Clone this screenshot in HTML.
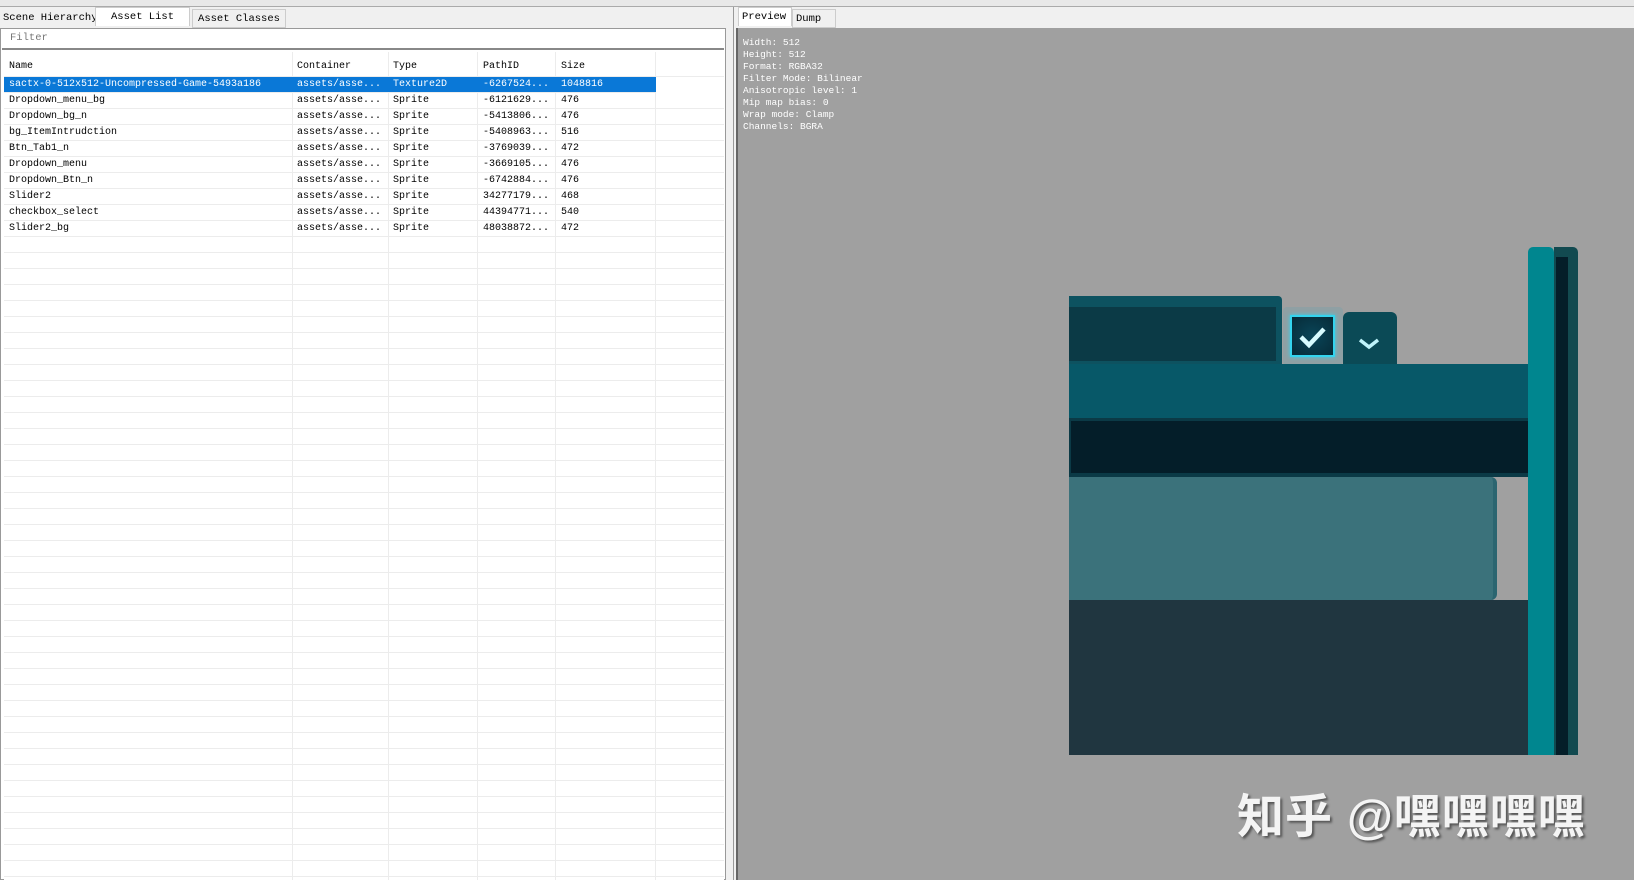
<!DOCTYPE html>
<html><head><meta charset="utf-8"><style>
*{margin:0;padding:0;box-sizing:border-box}
body{width:1634px;height:880px;overflow:hidden;background:#f0f0f0;font-family:"Liberation Mono","Noto Sans CJK SC",monospace;font-size:10px;color:#000;position:relative}
.a{position:absolute}
.tab{position:absolute;top:9px;height:19px;line-height:18px;font-size:10.5px;padding:0 3px}
.grid{position:absolute;left:4px;top:52px;width:720px;height:828px;background:#fff}
.row{position:absolute;left:4px;height:16px;width:720px;border-bottom:1px solid #ececec}
.row span{position:absolute;top:2px;white-space:nowrap}
.vl{position:absolute;top:52px;bottom:0;width:1px;background:#ececec}
.info{position:absolute;left:743px;top:37px;color:#fff;font-size:9.5px;line-height:12px;white-space:pre}
</style></head><body>
<div class="a" style="left:0;top:0;width:1634px;height:7px;background:#e8e8e8;border-bottom:1px solid #aaa"></div>
<div class="a" style="left:0;top:28px;width:726px;height:852px;background:#fff;border:1px solid #999"></div>
<div class="tab" style="left:0;background:#f0f0f0">Scene Hierarchy</div>
<div class="tab" style="left:95px;top:7px;width:95px;background:#fff;border:1px solid #ccc;border-bottom:none;text-align:center">Asset List</div>
<div class="tab" style="left:192px;width:94px;background:#f0f0f0;border:1px solid #ccc;text-align:center">Asset Classes</div>
<div class="a" style="left:2px;top:29px;width:722px;height:21px;border-bottom:2px solid #888;background:#fff;color:#777;padding:3px 8px;font-size:10.5px">Filter</div>
<div class="grid"></div>
<div class="vl" style="left:292px"></div><div class="vl" style="left:388px"></div><div class="vl" style="left:477px"></div><div class="vl" style="left:555px"></div><div class="vl" style="left:655px"></div>
<div class="row" style="top:56px;height:21px"><span style="left:5px;top:5px">Name</span><span style="left:293px;top:5px">Container</span><span style="left:389px;top:5px">Type</span><span style="left:479px;top:5px">PathID</span><span style="left:557px;top:5px">Size</span></div>
<div class="row" style="top:77px;background:#0a78d7;color:#fff;width:652px"><span style="left:5px">sactx-0-512x512-Uncompressed-Game-5493a186</span><span style="left:293px">assets/asse...</span><span style="left:389px">Texture2D</span><span style="left:479px">-6267524...</span><span style="left:557px">1048816</span></div>
<div class="row" style="top:93px"><span style="left:5px">Dropdown_menu_bg</span><span style="left:293px">assets/asse...</span><span style="left:389px">Sprite</span><span style="left:479px">-6121629...</span><span style="left:557px">476</span></div>
<div class="row" style="top:109px"><span style="left:5px">Dropdown_bg_n</span><span style="left:293px">assets/asse...</span><span style="left:389px">Sprite</span><span style="left:479px">-5413806...</span><span style="left:557px">476</span></div>
<div class="row" style="top:125px"><span style="left:5px">bg_ItemIntrudction</span><span style="left:293px">assets/asse...</span><span style="left:389px">Sprite</span><span style="left:479px">-5408963...</span><span style="left:557px">516</span></div>
<div class="row" style="top:141px"><span style="left:5px">Btn_Tab1_n</span><span style="left:293px">assets/asse...</span><span style="left:389px">Sprite</span><span style="left:479px">-3769039...</span><span style="left:557px">472</span></div>
<div class="row" style="top:157px"><span style="left:5px">Dropdown_menu</span><span style="left:293px">assets/asse...</span><span style="left:389px">Sprite</span><span style="left:479px">-3669105...</span><span style="left:557px">476</span></div>
<div class="row" style="top:173px"><span style="left:5px">Dropdown_Btn_n</span><span style="left:293px">assets/asse...</span><span style="left:389px">Sprite</span><span style="left:479px">-6742884...</span><span style="left:557px">476</span></div>
<div class="row" style="top:189px"><span style="left:5px">Slider2</span><span style="left:293px">assets/asse...</span><span style="left:389px">Sprite</span><span style="left:479px">34277179...</span><span style="left:557px">468</span></div>
<div class="row" style="top:205px"><span style="left:5px">checkbox_select</span><span style="left:293px">assets/asse...</span><span style="left:389px">Sprite</span><span style="left:479px">44394771...</span><span style="left:557px">540</span></div>
<div class="row" style="top:221px"><span style="left:5px">Slider2_bg</span><span style="left:293px">assets/asse...</span><span style="left:389px">Sprite</span><span style="left:479px">48038872...</span><span style="left:557px">472</span></div>
<div class="a" style="left:4px;top:237px;width:720px;height:643px;background:repeating-linear-gradient(#fff 0 15px,#ececec 15px 16px)"></div>
<div class="vl" style="left:292px;top:237px"></div><div class="vl" style="left:388px;top:237px"></div><div class="vl" style="left:477px;top:237px"></div><div class="vl" style="left:555px;top:237px"></div><div class="vl" style="left:655px;top:237px"></div>
<div class="a" style="left:726px;top:7px;width:8px;height:873px;background:#f0f0f0;border-right:1px solid #999"></div>
<div class="tab" style="left:738px;top:7px;width:54px;background:#fff;border:1px solid #ccc;border-bottom:none">Preview</div>
<div class="tab" style="left:792px;width:44px;background:#f0f0f0;border:1px solid #ccc">Dump</div>
<div class="a" style="left:736px;top:28px;width:898px;height:852px;background:#a0a0a0;border-left:2px solid #666"></div>
<div class="info">Width: 512
Height: 512
Format: RGBA32
Filter Mode: Bilinear
Anisotropic level: 1
Mip map bias: 0
Wrap mode: Clamp
Channels: BGRA</div>
<div class="a" style="left:1069px;top:296px;width:213px;height:68px;background:#0d5260;border-radius:0 4px 0 0"></div>
<div class="a" style="left:1069px;top:307px;width:207px;height:54px;background:#0b3a46"></div>
<div class="a" style="left:1283px;top:307px;width:60px;height:58px;background:#8fa0a4;border-radius:4px"></div>
<div class="a" style="left:1290px;top:315px;width:45px;height:42px;background:radial-gradient(#0a4558,#062b38);border:2px solid #34d4ee;box-shadow:0 0 4px #34d4ee"></div>
<svg class="a" style="left:1290px;top:315px" width="45" height="42"><path d="M11 22 L19 30 L34 14" stroke="#d8fbff" stroke-width="4.5" fill="none"/></svg>
<div class="a" style="left:1343px;top:312px;width:54px;height:52px;background:#0b4a56;border-radius:6px 6px 0 0"></div>
<svg class="a" style="left:1343px;top:312px" width="54" height="52"><path d="M17 28 L26 35 L35 28" stroke="#bff4fb" stroke-width="3.5" fill="none"/></svg>
<div class="a" style="left:1069px;top:364px;width:466px;height:54px;background:#075868;border-radius:0 4px 0 0"></div>
<div class="a" style="left:1069px;top:418px;width:466px;height:59px;background:#0b3a46"></div>
<div class="a" style="left:1071px;top:421px;width:459px;height:52px;background:#041e29"></div>
<div class="a" style="left:1069px;top:477px;width:428px;height:123px;background:#3b727b;border-radius:0 6px 6px 0;border-right:4px solid #2b6570"></div>
<div class="a" style="left:1069px;top:600px;width:466px;height:155px;background:#203640;border-radius:0 4px 0 0"></div>
<div class="a" style="left:1528px;top:247px;width:26px;height:508px;background:#00868f;border-radius:5px 5px 0 0"></div>
<div class="a" style="left:1554px;top:247px;width:24px;height:508px;background:#124a50;border-radius:0 5px 0 0"></div>
<div class="a" style="left:1556px;top:257px;width:12px;height:498px;background:#041e29"></div>
<div class="a" style="left:1237px;top:778px;font-family:'Liberation Sans','Noto Sans CJK SC',sans-serif;font-size:47px;font-weight:bold;color:#f4f4f4;text-shadow:2px 2px 2px #555;white-space:nowrap;letter-spacing:1px">知乎 @嘿嘿嘿嘿</div>
</body></html>
